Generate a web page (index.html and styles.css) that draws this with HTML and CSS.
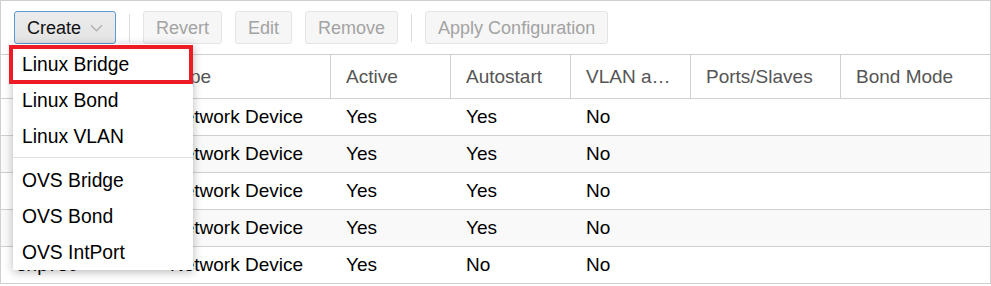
FILE: index.html
```html
<!DOCTYPE html>
<html>
<head>
<meta charset="utf-8">
<link rel="stylesheet" href="styles.css">
</head>
<body>
<div class="panel">
  <div class="toolbar">
    <div class="dropdown">
      <button class="btn btn-create">Create<svg class="chev" width="14" height="8" viewBox="0 0 14 8"><polyline points="1,1 7,7 13,1" fill="none" stroke="#b0b0b0" stroke-width="1.3"/></svg></button>
      <div class="menu">
        <div class="menu-item marked">Linux Bridge</div>
        <div class="menu-item">Linux Bond</div>
        <div class="menu-item">Linux VLAN</div>
        <div class="menu-sep"></div>
        <div class="menu-item">OVS Bridge</div>
        <div class="menu-item">OVS Bond</div>
        <div class="menu-item">OVS IntPort</div>
      </div>
    </div>
    <span class="tsep"></span>
    <button class="btn disabled">Revert</button>
    <button class="btn disabled">Edit</button>
    <button class="btn disabled">Remove</button>
    <span class="tsep"></span>
    <button class="btn disabled">Apply Configuration</button>
  </div>
  <div class="grid">
    <div class="row head">
      <div class="cell">Name</div>
      <div class="cell">Type</div>
      <div class="cell">Active</div>
      <div class="cell">Autostart</div>
      <div class="cell">VLAN aware</div>
      <div class="cell">Ports/Slaves</div>
      <div class="cell">Bond Mode</div>
    </div>
    <div class="row">
      <div class="cell">enp1s0</div><div class="cell">Network Device</div><div class="cell">Yes</div><div class="cell">Yes</div><div class="cell">No</div><div class="cell"></div><div class="cell"></div>
    </div>
    <div class="row alt">
      <div class="cell">enp2s0</div><div class="cell">Network Device</div><div class="cell">Yes</div><div class="cell">Yes</div><div class="cell">No</div><div class="cell"></div><div class="cell"></div>
    </div>
    <div class="row">
      <div class="cell">enp3s0</div><div class="cell">Network Device</div><div class="cell">Yes</div><div class="cell">Yes</div><div class="cell">No</div><div class="cell"></div><div class="cell"></div>
    </div>
    <div class="row alt">
      <div class="cell">enp4s0</div><div class="cell">Network Device</div><div class="cell">Yes</div><div class="cell">Yes</div><div class="cell">No</div><div class="cell"></div><div class="cell"></div>
    </div>
    <div class="row">
      <div class="cell">enp7s0</div><div class="cell">Network Device</div><div class="cell">Yes</div><div class="cell">No</div><div class="cell">No</div><div class="cell"></div><div class="cell"></div>
    </div>
  </div>
</div>
</body>
</html>
```

FILE: styles.css
```css
html, body {
  margin: 0;
  padding: 0;
  background: #fff;
}
body {
  font-family: "Liberation Sans", Arial, sans-serif;
  color: #000;
}
.panel {
  width: 991px;
  box-sizing: border-box;
  border: 1px solid #d0d0d0;
  border-bottom: none;
}
.toolbar {
  display: flex;
  align-items: center;
  gap: 13px;
  height: 54px;
  border-bottom: 1px solid #d0d0d0;
  padding-left: 13px;
  box-sizing: border-box;
}
.btn {
  font-family: "Liberation Sans", Arial, sans-serif;
  font-size: 18px;
  line-height: 21px;
  height: 33px;
  box-sizing: border-box;
  padding: 6px 12px 4px;
  border-radius: 3px;
  border: 1px solid #e4e4e4;
  background: #f6f6f6;
  color: #a3a3a3;
  margin: 0;
  display: flex;
  align-items: center;
}
.btn-create {
  border-color: #5a9ad6;
  background: linear-gradient(#ececec, #e4e4e4);
  color: #111;
  width: 102px;
}
.chev {
  margin-left: 9px;
  margin-top: -1px;
}
.tsep {
  width: 1px;
  height: 28px;
  background: #dcdcdc;
}
.dropdown {
  position: relative;
}
.menu {
  position: absolute;
  left: -1px;
  top: 100%;
  width: 180px;
  background: #fff;
  padding: 2px 0 0 0;
  box-shadow: 0 2px 9px rgba(0, 0, 0, 0.28);
  z-index: 10;
}
.menu-item {
  position: relative;
  height: 36px;
  line-height: 37px;
  padding-left: 9px;
  font-size: 19.3px;
  color: #000;
}
.menu-item.marked::after {
  content: "";
  position: absolute;
  left: -4px;
  right: 0;
  top: -1px;
  bottom: -2px;
  border: 4px solid #ed1c24;
}
.menu-sep {
  height: 1px;
  background: #e0e0e0;
  margin: 3px 0 4px;
}
.grid {
  display: flex;
  flex-direction: column;
}
.row {
  display: grid;
  grid-template-columns: 154px 176px 120px 120px 120px 150px 1fr;
  height: 37px;
  box-sizing: border-box;
  border-bottom: 1px solid #d0d0d0;
  font-size: 19px;
}
.row.alt {
  background: #f9f9f9;
}
.row.head {
  height: 44px;
  color: #555;
}
.row.head .cell {
  border-right: 1px solid #d0d0d0;
}
.row.head .cell:last-child {
  border-right: none;
}
.cell {
  padding: 0 15px;
  display: flex;
  align-items: center;
  white-space: nowrap;
  overflow: hidden;
  min-width: 0;
  box-sizing: border-box;
}
.row.head .cell {
  display: block;
  line-height: 43px;
  text-overflow: ellipsis;
}
```
